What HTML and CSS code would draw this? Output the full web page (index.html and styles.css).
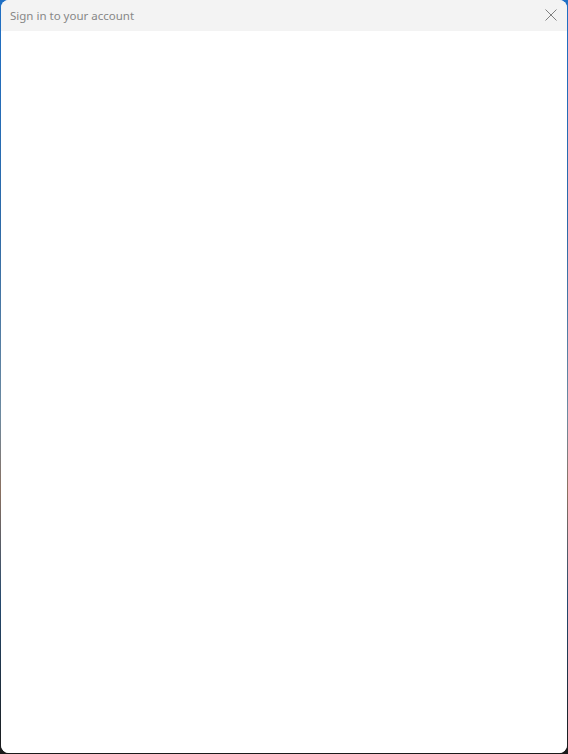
FILE: index.html
```html
<!DOCTYPE html>
<html>
<head>
<meta charset="utf-8">
<link rel="stylesheet" href="styles.css">
</head>
<body>
<div class="window">
  <div class="titlebar">
    <span class="title">Sign in to your account</span>
    <button class="close" aria-label="Close">
      <svg width="12" height="12" viewBox="0 0 12 12"><path d="M0.5 0.5L11.5 11.5M11.5 0.5L0.5 11.5" stroke="#808080" stroke-width="1" fill="none"/></svg>
    </button>
  </div>
  <div class="content"></div>
</div>
</body>
</html>
```
FILE: styles.css
```css
html, body {
  margin: 0;
  padding: 0;
  width: 568px;
  height: 754px;
  overflow: hidden;
}
body {
  background: linear-gradient(180deg, #1f6fc4 0%, #2d6aa8 30%, #6d8aa0 55%, #8a7060 65%, #24496e 80%, #1a1a1a 100%);
  font-family: "Noto Sans", "Open Sans", sans-serif;
}
.window {
  box-sizing: border-box;
  margin: 0 1px;
  height: 753px;
  background: #ffffff;
  border-radius: 8px;
  overflow: hidden;
  display: flex;
  flex-direction: column;
}
.titlebar {
  height: 31px;
  background: #f3f3f3;
  display: flex;
  align-items: center;
  justify-content: space-between;
  padding-left: 9px;
  flex-shrink: 0;
}
.title {
  font-size: 11.5px;
  color: #878787;
  padding-bottom: 1px;
}
.close {
  width: 32px;
  height: 31px;
  border: none;
  background: transparent;
  padding: 0 0 2px 0;
  display: flex;
  align-items: center;
  justify-content: center;
}
.content {
  flex: 1;
  background: #ffffff;
}
```
